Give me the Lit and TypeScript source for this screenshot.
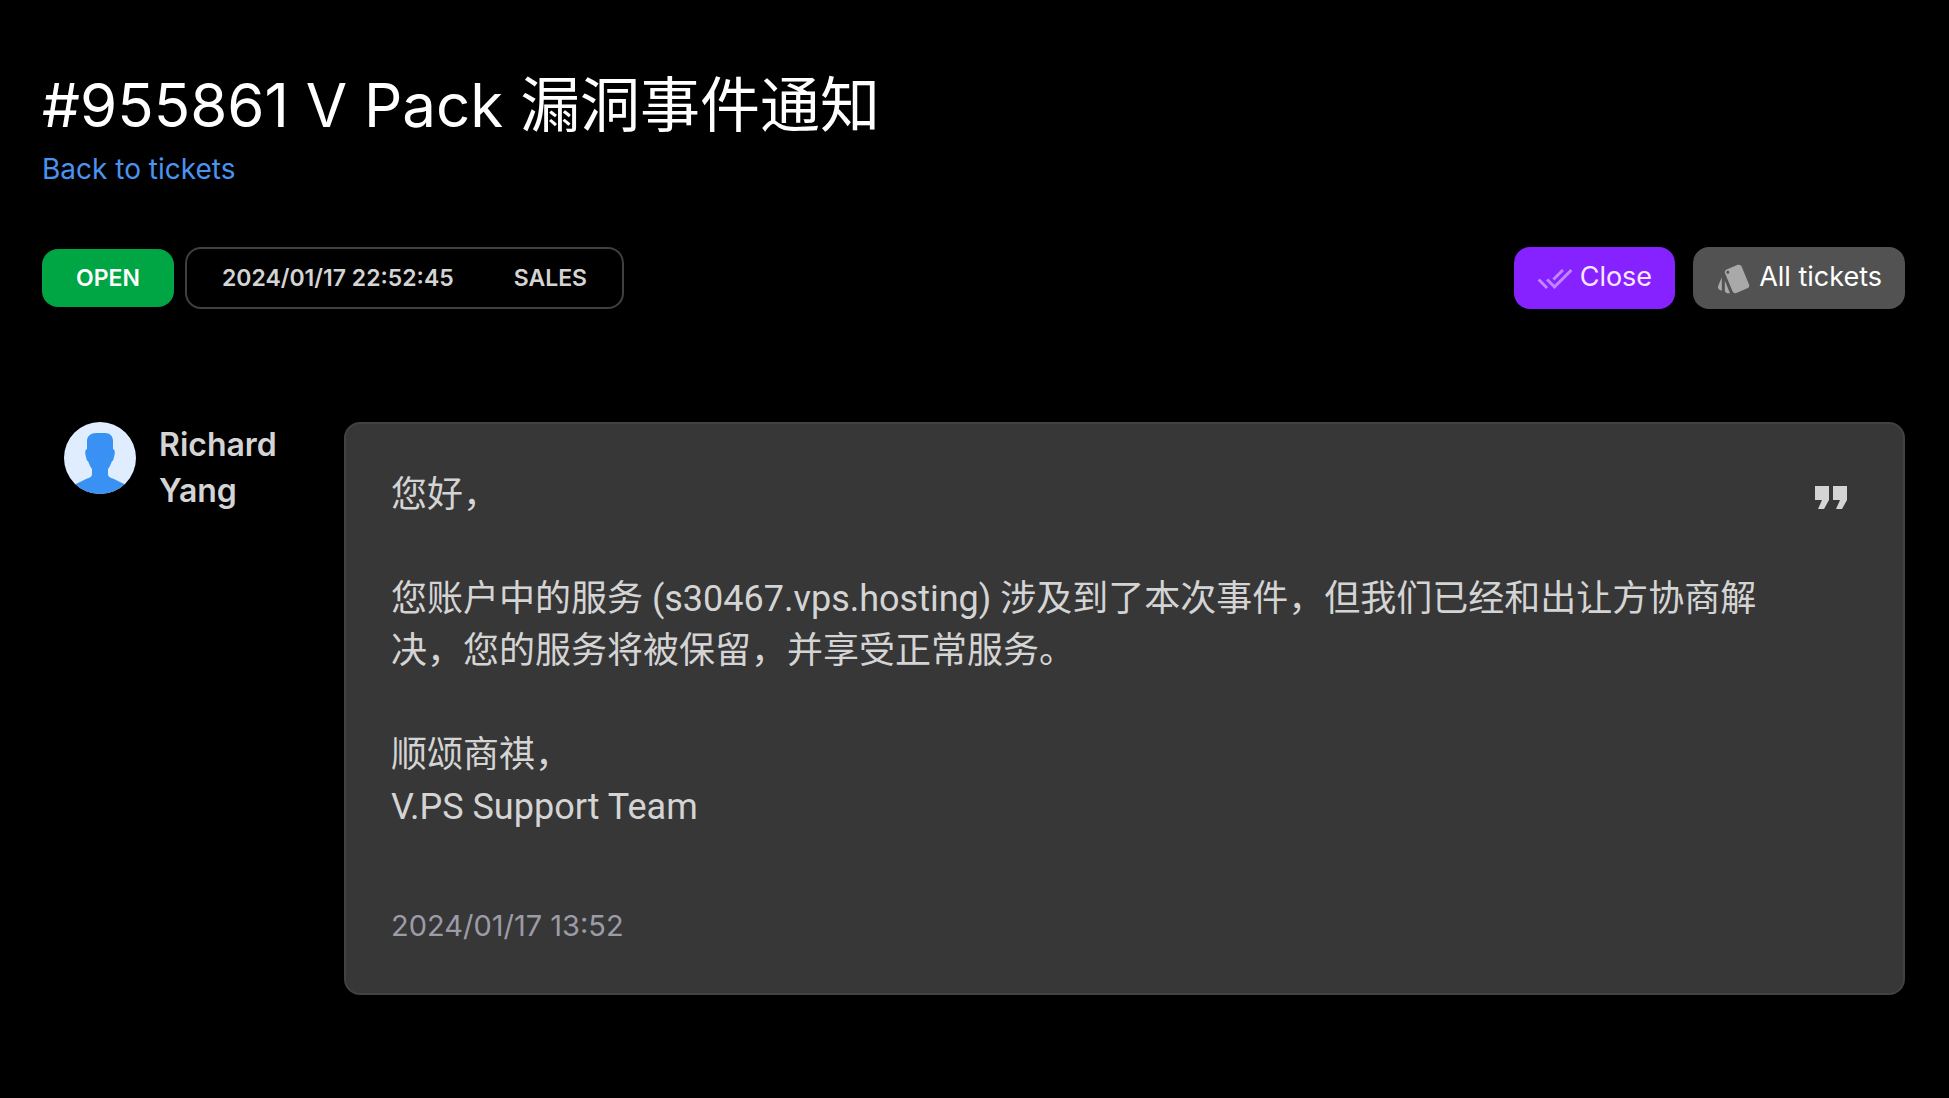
import { LitElement, html, css } from "lit";
import { customElement, property } from "lit/decorators.js";

const fontStack = css`Inter, "Noto Sans CJK SC", sans-serif`;

@customElement("ticket-toolbar")
class TicketToolbar extends LitElement {
  static styles = css`
    :host {
      display: flex;
      flex-wrap: wrap;
      align-items: center;
      justify-content: space-between;
      gap: 18px;
      font-family: ${fontStack};
    }
    .group {
      display: flex;
      align-items: center;
    }
    .tags {
      gap: 11px;
      font-size: 23px;
      line-height: 32px;
      font-weight: 600;
    }
    .actions {
      gap: 18px;
    }
    .status {
      padding: 13px 34px;
      border-radius: 16px;
      background: #00a544;
      color: #fff;
    }
    .meta {
      display: flex;
      gap: 60px;
      padding: 13px 35px;
      border: 2px solid #404040;
      border-radius: 16px;
      color: #d4d4d4;
    }
    .button {
      box-sizing: border-box;
      display: flex;
      align-items: center;
      gap: 7px;
      height: 62px;
      padding: 0 23px 2px;
      border: 0;
      border-radius: 16px;
      background: #525252;
      color: #fff;
      font-family: inherit;
      font-size: 27px;
      line-height: 36px;
      text-decoration: none;
      cursor: pointer;
    }
    .primary {
      background: #8622ff;
      color: #fbe8ff;
    }
    .icon {
      width: 36px;
      height: 36px;
      fill: currentColor;
      opacity: 0.5;
    }
  `;

  @property() status = "";
  @property() opened = "";
  @property() department = "";

  render() {
    return html`
      <div class="group tags">
        <span class="status">${this.status}</span>
        <div class="meta">
          <time>${this.opened}</time>
          <span>${this.department}</span>
        </div>
      </div>
      <div class="group actions">
        <button class="button primary" type="button">
          <svg class="icon" viewBox="0 -1 24 24" aria-hidden="true">
            <path d="M18 7l-1.41-1.41-6.34 6.34 1.41 1.41L18 7zm4.24-1.41L11.66 16.17 7.48 12l-1.41 1.41L11.66 19l12-12-1.42-1.41zM.41 13.41L6 19l1.41-1.41L1.83 12 .41 13.41z" />
          </svg>
          Close
        </button>
        <a class="button" href="#tickets">
          <svg class="icon" viewBox="0 -1 24 24" aria-hidden="true">
            <path d="M2.53 19.65l1.34.56v-9.03l-2.43 5.86c-.41 1.02.08 2.19 1.09 2.61zm19.5-3.7L17.07 3.98c-.31-.75-1.04-1.21-1.81-1.23-.26 0-.53.04-.79.15L7.1 5.95c-.75.31-1.21 1.03-1.23 1.8-.01.27.04.54.15.8l4.96 11.97c.31.76 1.05 1.22 1.83 1.23.26 0 .52-.05.77-.15l7.36-3.05c1.02-.42 1.51-1.59 1.09-2.6zM7.88 8.75c-.55 0-1-.45-1-1s.45-1 1-1 1 .45 1 1-.45 1-1 1zm-2 11c0 1.1.9 2 2 2h1.45l-3.45-8.34v6.34z" />
          </svg>
          All tickets
        </a>
      </div>
    `;
  }
}

@customElement("ticket-message")
class TicketMessage extends LitElement {
  static styles = css`
    :host {
      display: grid;
      grid-template-columns: 280px 1fr;
      gap: 22px;
      font-family: ${fontStack};
      color: #d4d4d4;
    }
    .author {
      display: flex;
      align-items: flex-start;
      gap: 23px;
      padding-left: 22px;
    }
    .avatar {
      flex: none;
      width: 72px;
      height: 72px;
      border-radius: 50%;
    }
    .name {
      width: min-content;
      margin: 0;
      font-size: 32px;
      line-height: 46px;
      font-weight: 600;
    }
    .card {
      display: flex;
      align-items: flex-start;
      justify-content: space-between;
      gap: 32px;
      padding: 45px 55px 47px 45px;
      border: 2px solid #424242;
      border-radius: 16px;
      background: #373737;
    }
    .text {
      margin: 0 0 73px;
      white-space: pre-line;
      font-family: Roboto, "Noto Sans CJK SC", sans-serif;
      font-size: 36px;
      line-height: 52px;
    }
    .date {
      display: block;
      color: #9c9ca8;
      font-size: 29px;
      line-height: 40px;
    }
    .quote {
      flex: none;
      display: block;
      padding: 0;
      border: 0;
      background: none;
      color: inherit;
      cursor: pointer;
    }
    .quote-icon {
      display: block;
      width: 36px;
      height: 60px;
      fill: currentColor;
    }
  `;

  @property() author = "";
  @property() text = "";
  @property() date = "";

  render() {
    return html`
      <div class="author">
        <svg class="avatar" viewBox="0 0 72 72" aria-hidden="true">
          <rect width="72" height="72" fill="#e0edff" />
          <path
            fill="#3992f3"
            d="M32 11h9c5 0 8 3 8 8v8c2 1 2 3 1.500 6l-1 4c-.5 2-1 2-1.500 2-1 3-2 5-4 8v5c0 3 3 4 6 5l8 4c3 1 5 3 6 5v8H8v-8c1-2 3-4 6-5l8-4c3-1 6-2 6-5v-5c-2-3-3-5-4-8-.5 0-1 0-1.500-2l-1-4c-.5-3-.5-5 1.500-6v-8c0-5 4-8 9-8z"
          />
        </svg>
        <h2 class="name">${this.author}</h2>
      </div>
      <article class="card">
        <div>
          <p class="text">${this.text}</p>
          <time class="date">${this.date}</time>
        </div>
        <button class="quote" type="button" aria-label="Quote">
          <svg class="quote-icon" viewBox="0 0 36 60" aria-hidden="true">
            <path d="M3 17h14v14l-5 9H6l4-9H3zM21 17h14v14l-5 9h-6l4-9h-7z" />
          </svg>
        </button>
      </article>
    `;
  }
}

@customElement("app-root")
class AppRoot extends LitElement {
  static styles = css`
    :host {
      display: block;
      box-sizing: border-box;
      min-height: 100vh;
      padding: 65px 44px 64px 42px;
      background: #000;
      color: #fff;
      font-family: ${fontStack};
    }
    .title {
      margin: 0;
      font-size: 60px;
      line-height: 80px;
      font-weight: 400;
    }
    .back {
      display: inline-block;
      margin: 4px 0 58px;
      color: #4b93f0;
      font-size: 28px;
      line-height: 40px;
      text-decoration: none;
    }
    .thread {
      margin-top: 113px;
    }
  `;

  render() {
    return html`
      <main lang="zh-CN">
        <h1 class="title">#955861 V Pack 漏洞事件通知</h1>
        <a class="back" href="#tickets">Back to tickets</a>
        <ticket-toolbar status="OPEN" opened="2024/01/17 22:52:45" department="SALES"></ticket-toolbar>
        <ticket-message
          class="thread"
          author="Richard Yang"
          date="2024/01/17 13:52"
          .text=${"您好，\n\n您账户中的服务 (s30467.vps.hosting) 涉及到了本次事件，但我们已经和出让方协商解决，您的服务将被保留，并享受正常服务。\n\n顺颂商祺，\nV.PS Support Team"}
        ></ticket-message>
      </main>
    `;
  }
}
